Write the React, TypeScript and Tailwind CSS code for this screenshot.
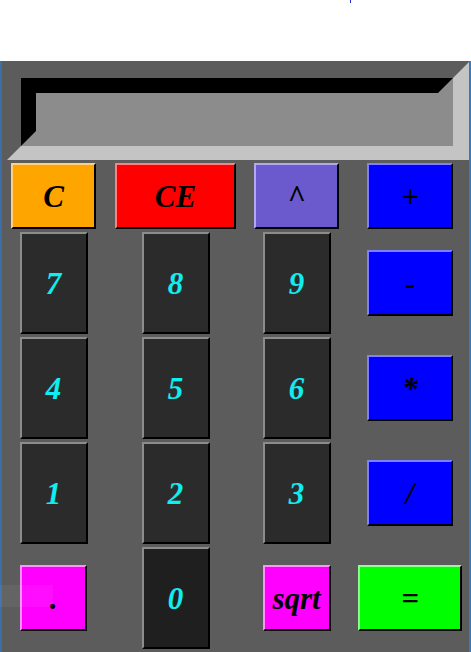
import React from "react";

type Key = {
  label: string;
  col: string;
  row: string;
  size: string;
  face: string;
  text: string;
};

const serif = { fontFamily: '"Liberation Serif", "Times New Roman", serif' };

const keys: Key[] = [
  { label: "C", col: "col-start-1", row: "row-start-1", size: "w-[85px] h-[66px]", face: "bg-[#ffa500] border-t-[#ffd080] border-l-[#ffd080]", text: "text-black" },
  { label: "CE", col: "col-start-2", row: "row-start-1", size: "w-[121px] h-[66px]", face: "bg-[#ff0000] border-t-[#ff8080] border-l-[#ff8080]", text: "text-black" },
  { label: "^", col: "col-start-3", row: "row-start-1", size: "w-[85px] h-[66px]", face: "bg-[#6a5acd] border-t-[#b0a8f0] border-l-[#b0a8f0]", text: "text-black" },
  { label: "+", col: "col-start-4", row: "row-start-1", size: "w-[86px] h-[66px]", face: "bg-[#0000ff] border-t-[#8080ff] border-l-[#8080ff]", text: "text-black" },

  { label: "7", col: "col-start-1", row: "row-start-2", size: "w-[68px] h-[102px]", face: "bg-[#2b2b2b] border-t-[#8c8c8c] border-l-[#8c8c8c]", text: "text-[#10ecf0]" },
  { label: "8", col: "col-start-2", row: "row-start-2", size: "w-[68px] h-[102px]", face: "bg-[#2b2b2b] border-t-[#8c8c8c] border-l-[#8c8c8c]", text: "text-[#10ecf0]" },
  { label: "9", col: "col-start-3", row: "row-start-2", size: "w-[68px] h-[102px]", face: "bg-[#2b2b2b] border-t-[#8c8c8c] border-l-[#8c8c8c]", text: "text-[#10ecf0]" },
  { label: "-", col: "col-start-4", row: "row-start-2", size: "w-[86px] h-[66px]", face: "bg-[#0000ff] border-t-[#8080ff] border-l-[#8080ff]", text: "text-black" },

  { label: "4", col: "col-start-1", row: "row-start-3", size: "w-[68px] h-[102px]", face: "bg-[#2b2b2b] border-t-[#8c8c8c] border-l-[#8c8c8c]", text: "text-[#10ecf0]" },
  { label: "5", col: "col-start-2", row: "row-start-3", size: "w-[68px] h-[102px]", face: "bg-[#2b2b2b] border-t-[#8c8c8c] border-l-[#8c8c8c]", text: "text-[#10ecf0]" },
  { label: "6", col: "col-start-3", row: "row-start-3", size: "w-[68px] h-[102px]", face: "bg-[#2b2b2b] border-t-[#8c8c8c] border-l-[#8c8c8c]", text: "text-[#10ecf0]" },
  { label: "*", col: "col-start-4", row: "row-start-3", size: "w-[86px] h-[66px]", face: "bg-[#0000ff] border-t-[#8080ff] border-l-[#8080ff]", text: "text-black" },

  { label: "1", col: "col-start-1", row: "row-start-4", size: "w-[68px] h-[102px]", face: "bg-[#2b2b2b] border-t-[#8c8c8c] border-l-[#8c8c8c]", text: "text-[#10ecf0]" },
  { label: "2", col: "col-start-2", row: "row-start-4", size: "w-[68px] h-[102px]", face: "bg-[#2b2b2b] border-t-[#8c8c8c] border-l-[#8c8c8c]", text: "text-[#10ecf0]" },
  { label: "3", col: "col-start-3", row: "row-start-4", size: "w-[68px] h-[102px]", face: "bg-[#2b2b2b] border-t-[#8c8c8c] border-l-[#8c8c8c]", text: "text-[#10ecf0]" },
  { label: "/", col: "col-start-4", row: "row-start-4", size: "w-[86px] h-[66px]", face: "bg-[#0000ff] border-t-[#8080ff] border-l-[#8080ff]", text: "text-black" },

  { label: ".", col: "col-start-1", row: "row-start-5", size: "w-[67px] h-[66px]", face: "bg-[#ff00ff] border-t-[#ff90ff] border-l-[#ff90ff]", text: "text-black" },
  { label: "0", col: "col-start-2", row: "row-start-5", size: "w-[68px] h-[102px]", face: "bg-[#1f1f1f] border-t-[#8c8c8c] border-l-[#8c8c8c]", text: "text-[#10ecf0]" },
  { label: "sqrt", col: "col-start-3", row: "row-start-5", size: "w-[68px] h-[66px]", face: "bg-[#ff00ff] border-t-[#ff90ff] border-l-[#ff90ff]", text: "text-black" },
  { label: "=", col: "col-start-4", row: "row-start-5", size: "w-[104px] h-[66px]", face: "bg-[#00ff00] border-t-[#90ff90] border-l-[#90ff90]", text: "text-black" },
];

function CalcKey({ k }: { k: Key }) {
  return (
    <button
      className={`${k.col} ${k.row} ${k.size} ${k.face} ${k.text} self-center justify-self-center flex items-center justify-center border-2 border-b-black border-r-black text-[31px] font-bold italic leading-none`}
      style={serif}
    >
      {k.label}
    </button>
  );
}

export default function App() {
  return (
    <div className="relative w-[471px] h-[652px] bg-white overflow-hidden">
      <div className="h-[61px] relative">
        <div className="absolute left-[350px] top-0 w-px h-[3px] bg-[#2828c8]" />
      </div>

      <div className="flex h-[591px]">
        <div className="w-[2px] bg-[#3d6ea6]" />

        <div className="flex-1 bg-[#5c5c5c] overflow-hidden">
          <div className="ml-[5px] mt-[1px] w-[462px] h-[98px] border-solid border-l-[14px] border-t-[16px] border-r-[16px] border-b-[14px] border-l-[#5c5c5c] border-t-[#5c5c5c] border-r-[#c4c4c4] border-b-[#c4c4c4]">
            <div className="w-full h-full bg-[#8c8c8c] border-solid border-[15px] border-l-black border-t-black border-r-[#8c8c8c] border-b-[#8c8c8c]" />
          </div>

          <div className="mt-[3px] grid grid-cols-[103px_141px_101px_126px] grid-rows-[66px_102px_102px_102px_102px] gap-y-[3px]">
            {keys.map((k) => (
              <CalcKey key={k.label} k={k} />
            ))}
          </div>
        </div>

        <div className="w-[2px] bg-[#3a78c0]" />
      </div>

      <div className="absolute left-0 top-[585px] w-[53px] h-[22px] bg-white/5" />
    </div>
  );
}
